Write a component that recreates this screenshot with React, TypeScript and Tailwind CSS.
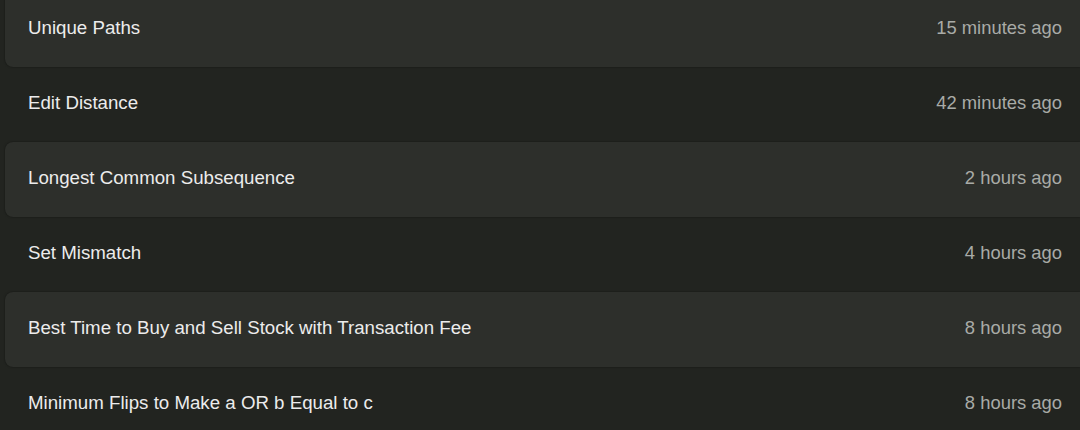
const rows = [
  { title: "Unique Paths", time: "15 minutes ago" },
  { title: "Edit Distance", time: "42 minutes ago" },
  { title: "Longest Common Subsequence", time: "2 hours ago" },
  { title: "Set Mismatch", time: "4 hours ago" },
  { title: "Best Time to Buy and Sell Stock with Transaction Fee", time: "8 hours ago" },
  { title: "Minimum Flips to Make a OR b Equal to c", time: "8 hours ago" },
];

export default function App() {
  return (
    <div className="h-[430px] w-[1080px] overflow-hidden bg-[#222420] pl-[5px] font-['Liberation_Sans',Arial,sans-serif]">
      <div className="-mt-[8px] flex flex-col">
        {rows.map((r, i) => (
          <div
            key={r.title}
            className={`flex h-[75px] items-center justify-between pb-[2px] pl-[23px] pr-[18px] ${
              i % 2 === 0 ? "rounded-l-lg bg-[#2d2f2b] shadow-[0_0_2px_rgba(0,0,0,0.5)]" : ""
            }`}
          >
            <span className="text-[18.7px] text-[#ececec]">{r.title}</span>
            <span className="pb-[2px] text-[18.4px] text-[#a9aba7]">{r.time}</span>
          </div>
        ))}
      </div>
    </div>
  );
}
